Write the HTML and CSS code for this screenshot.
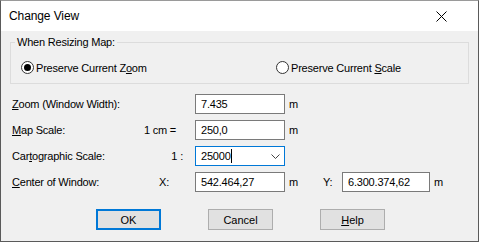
FILE: index.html
```html
<!DOCTYPE html>
<html lang="en">
<head>
  <meta charset="UTF-8" />
  <title>Change View</title>
  <link rel="stylesheet" href="styles.css">
</head>
<body>
  <div class="window">
    <div class="titlebar">
      <span class="title">Change View</span>
      <svg class="close" width="11" height="11" viewBox="0 0 11 11">
        <path d="M0.5 0.5 L10.5 10.5 M10.5 0.5 L0.5 10.5" stroke="#000" stroke-width="1" fill="none" />
      </svg>
    </div>

    <div class="content">
      <fieldset class="group">
        <legend>When Resizing Map:</legend>
        <div class="radios">
          <label class="radio"><span class="dot checked"></span><span>Preserve Current Z<u>o</u>om</span></label>
          <label class="radio"><span class="dot"></span><span>Preserve Current <u>S</u>cale</span></label>
        </div>
      </fieldset>

      <div class="form">
        <div class="row">
          <span class="label"><u>Z</u>oom (Window Width):</span>
          <span></span>
          <div class="box">7.435</div>
          <span class="unit">m</span>
        </div>

        <div class="row">
          <span class="label"><u>M</u>ap Scale:</span>
          <span class="sub sub-cm">1 cm =</span>
          <div class="box">250,0</div>
          <span class="unit">m</span>
        </div>

        <div class="row">
          <span class="label">Car<u>t</u>ographic Scale:</span>
          <span class="sub sub-ratio">1 :</span>
          <div class="box combo">
            <span>25000<span class="caret"></span></span>
            <svg width="9" height="5" viewBox="0 0 9 5"><path d="M0.5 0.5 L4.5 4.5 L8.5 0.5" stroke="#444" fill="none" /></svg>
          </div>
        </div>

        <div class="row">
          <span class="label"><u>C</u>enter of Window:</span>
          <span class="sub sub-x">X:</span>
          <div class="box">542.464,27</div>
          <span class="unit">m</span>
          <span class="sub-y">Y:</span>
          <div class="box">6.300.374,62</div>
          <span class="unit">m</span>
        </div>
      </div>

      <div class="buttons">
        <button class="default">OK</button>
        <button>Cancel</button>
        <button><u>H</u>elp</button>
      </div>
    </div>
  </div>
</body>
</html>
```

FILE: styles.css
```css
* {
  box-sizing: border-box;
}
body {
  margin: 0;
  font-family: "Liberation Sans", Arial, sans-serif;
  font-size: 11px;
  letter-spacing: -0.2px;
  color: #000;
}
.window {
  width: 479px;
  height: 242px;
  border: 1px solid #5a5a5a;
  border-top-color: #9a9a9a;
  background: #f0f0f0;
  display: flex;
  flex-direction: column;
}
.titlebar {
  height: 30px;
  background: #fff;
  display: flex;
  align-items: center;
  justify-content: space-between;
  padding: 0 31px 0 8px;
}
.title {
  font-size: 12px;
  letter-spacing: -0.1px;
}
.close {
  display: block;
}
.content {
  flex: 1;
  padding: 0 9px 0 11px;
}
.group {
  margin: 4px 0 0 -2px;
  padding: 11px 10px 8px 10px;
  border: 1px solid #dcdcdc;
  min-width: 0;
}
.group legend {
  margin-left: -6px;
  padding: 0 2px;
  line-height: 14px;
}
.radios {
  display: grid;
  grid-template-columns: 255px auto;
  height: 15px;
  align-items: center;
}
.radio {
  display: flex;
  align-items: center;
  gap: 2px;
}
.dot {
  width: 13px;
  height: 13px;
  border: 1px solid #333;
  border-radius: 50%;
  background: #fff;
  display: flex;
  align-items: center;
  justify-content: center;
}
.dot.checked::after {
  content: "";
  width: 7px;
  height: 7px;
  border-radius: 50%;
  background: #000;
}
.form {
  margin-top: 10px;
  display: flex;
  flex-direction: column;
  gap: 6px;
}
.row {
  display: grid;
  grid-template-columns: 128px 55px 90px 28px 29px 88px auto;
  height: 20px;
  align-items: center;
}
.sub-cm {
  text-align: right;
  padding-right: 19px;
}
.sub-ratio {
  text-align: right;
  padding-right: 12px;
}
.sub-x {
  padding-left: 19px;
}
.sub-y {
  padding-left: 10px;
}
.unit {
  padding-left: 4px;
}
.box {
  height: 20px;
  border: 1px solid #7a7a7a;
  background: #fff;
  padding: 0 5px;
  display: flex;
  align-items: center;
}
.combo {
  border-color: #0078d7;
  justify-content: space-between;
  padding-right: 4px;
}
.combo span {
  display: flex;
  align-items: center;
}
.caret {
  display: inline-block;
  width: 1px;
  height: 14px;
  background: #000;
}
.buttons {
  margin-top: 17px;
  display: flex;
  justify-content: center;
  gap: 47px;
}
.buttons button {
  width: 65px;
  height: 21px;
  font: inherit;
  color: #000;
  background: #e1e1e1;
  border: 1px solid #adadad;
  padding: 0;
}
.buttons button.default {
  border: 2px solid #0078d7;
}
```
